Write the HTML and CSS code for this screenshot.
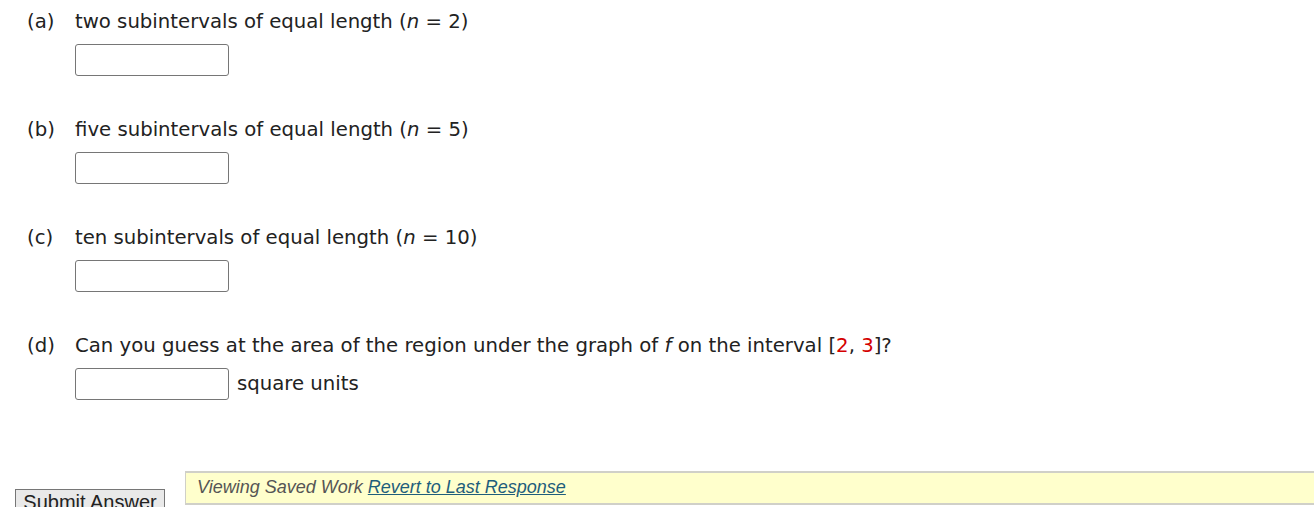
FILE: index.html
```html
<!DOCTYPE html>
<html>
<head>
<meta charset="utf-8">
<link rel="stylesheet" href="styles.css">
</head>
<body>
<div class="parts">
  <div class="part">
    <div class="label">(a)</div>
    <div class="body">
      <div class="q">two subintervals of equal length (<i>n</i> = 2)</div>
      <div class="ans"><span class="box"></span></div>
    </div>
  </div>
  <div class="part">
    <div class="label">(b)</div>
    <div class="body">
      <div class="q">five subintervals of equal length (<i>n</i> = 5)</div>
      <div class="ans"><span class="box"></span></div>
    </div>
  </div>
  <div class="part">
    <div class="label">(c)</div>
    <div class="body">
      <div class="q">ten subintervals of equal length (<i>n</i> = 10)</div>
      <div class="ans"><span class="box"></span></div>
    </div>
  </div>
  <div class="part">
    <div class="label">(d)</div>
    <div class="body">
      <div class="q">Can you guess at the area of the region under the graph of <i>f</i> on the interval [<span class="red">2</span>, <span class="red">3</span>]?</div>
      <div class="ans"><span class="box"></span><span class="unit">square units</span></div>
    </div>
  </div>
</div>
<div class="footer">
  <button class="submit">Submit Answer</button>
  <div class="saved"><span class="muted">Viewing Saved Work</span> <a href="#" class="revert">Revert to Last Response</a></div>
</div>
</body>
</html>
```

FILE: styles.css
```css
html, body {
  margin: 0;
  padding: 0;
  background: #fff;
  overflow: hidden;
}
body {
  font-family: "DejaVu Sans", Verdana, sans-serif;
  font-size: 19.7px;
  color: #222;
}
.parts {
  padding: 10px 0 0 27px;
  display: flex;
  flex-direction: column;
  gap: 42px;
}
.part {
  display: flex;
}
.label {
  width: 48px;
  line-height: 23px;
}
.q {
  line-height: 23px;
}
.q i {
  font-style: italic;
}
.red {
  color: #d40000;
}
.ans {
  margin-top: 11px;
  display: flex;
  align-items: center;
  gap: 8px;
}
.box {
  display: block;
  width: 152px;
  height: 30px;
  border: 1px solid #767676;
  border-radius: 3px;
  background: #fff;
}
.unit {
  line-height: 24px;
}
.footer {
  margin-top: 71px;
  display: flex;
  align-items: flex-start;
  padding-left: 15px;
  gap: 20px;
}
.submit {
  margin-top: 18px;
  width: 150px;
  height: 30px;
  padding: 0;
  font-family: "Liberation Sans", Arial, sans-serif;
  font-size: 20px;
  color: #222;
  background: #e9e9e9;
  border: 1px solid #767676;
  border-radius: 0;
  line-height: 24px;
  text-align: center;
  display: flex;
  align-items: flex-start;
  justify-content: center;
}
.saved {
  flex: 1;
  background: #ffffcc;
  border-top: 2px solid #d0d0c8;
  border-bottom: 2px solid #d0d0c8;
  border-left: 1px solid #d0d0c8;
  box-sizing: border-box;
  height: 34px;
  padding-left: 11px;
  font-family: "Liberation Sans", Arial, sans-serif;
  font-style: italic;
  font-size: 18px;
  line-height: 28px;
}
.muted {
  color: #555;
}
.revert {
  color: #1f5e7c;
  text-decoration: underline;
}
```
